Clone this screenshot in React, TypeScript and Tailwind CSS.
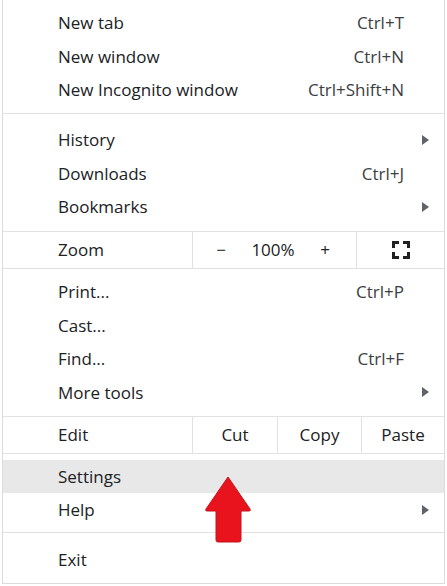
import type { ReactNode } from "react";

type Item = { label: string; shortcut?: string; submenu?: boolean; active?: boolean };

const font = { fontFamily: '"Open Sans", "Noto Sans", sans-serif' };

function Arrow() {
  return (
    <svg width="7" height="10" viewBox="0 0 7 10" className="absolute right-[15px] top-1/2 -translate-y-1/2">
      <path d="M0 0 L7 5 L0 10 Z" fill="#5f6368" />
    </svg>
  );
}

function Row({ item }: { item: Item }) {
  return (
    <div
      className={`relative flex h-[33.5px] items-center justify-between pl-[55px] pr-[40px] ${
        item.active ? "bg-[#e8e8e9]" : ""
      }`}
    >
      <span>{item.label}</span>
      {item.shortcut && <span className="text-[#3c4043]">{item.shortcut}</span>}
      {item.submenu && <Arrow />}
    </div>
  );
}

function Group({ items, className }: { items: Item[]; className: string }) {
  return (
    <div className={className}>
      {items.map((it) => (
        <Row key={it.label} item={it} />
      ))}
    </div>
  );
}

function Sep() {
  return <div className="h-px bg-[#e1e1e1]" />;
}

function Cell({ children, className }: { children: ReactNode; className: string }) {
  return <div className={`flex h-full items-center border-l border-[#e1e1e1] ${className}`}>{children}</div>;
}

function FullscreenIcon() {
  return (
    <svg width="18" height="18" viewBox="0 0 18 18" fill="none" stroke="#202124" strokeWidth="3">
      <path d="M1.5 7 V1.5 H7" />
      <path d="M11 1.5 H16.5 V7" />
      <path d="M16.5 11 V16.5 H11" />
      <path d="M7 16.5 H1.5 V11" />
    </svg>
  );
}

function RedArrow() {
  return (
    <svg
      width="50"
      height="70"
      viewBox="0 0 50 70"
      className="pointer-events-none absolute left-[203px] top-[475px]"
    >
      <path
        d="M25 2 L47 34 Q48 36 46 36 L38 36 L38 65 Q38 67 36 67 L15 67 Q13 67 13 65 L13 36 L4 36 Q2 36 3 34 Z"
        fill="#e8131d"
        stroke="#c4141c"
        strokeWidth="1"
        strokeLinejoin="round"
      />
    </svg>
  );
}

export default function App() {
  return (
    <div className="relative h-[586px] w-[447px] overflow-hidden bg-white text-[17px] text-[#202124]" style={font}>
      <div className="mx-[2px] h-[584px] border-x border-b border-[#dcdcdc]">
        <Group
          className="pt-[6px] pb-[6px]"
          items={[
            { label: "New tab", shortcut: "Ctrl+T" },
            { label: "New window", shortcut: "Ctrl+N" },
            { label: "New Incognito window", shortcut: "Ctrl+Shift+N" },
          ]}
        />
        <Sep />
        <Group
          className="pt-[9.5px] pb-[7px]"
          items={[
            { label: "History", submenu: true },
            { label: "Downloads", shortcut: "Ctrl+J" },
            { label: "Bookmarks", submenu: true },
          ]}
        />
        <Sep />
        <div className="flex h-[36px] items-center">
          <div className="flex h-full w-[189px] items-center pl-[55px]">Zoom</div>
          <Cell className="w-[164px] pl-[2px]">
            <span className="w-[52px] text-center">−</span>
            <span className="w-[52px] text-center">100%</span>
            <span className="w-[52px] text-center">+</span>
          </Cell>
          <Cell className="flex-1 justify-center">
            <FullscreenIcon />
          </Cell>
        </div>
        <Sep />
        <Group
          className="pt-[6.5px] pb-[6.5px]"
          items={[
            { label: "Print...", shortcut: "Ctrl+P" },
            { label: "Cast..." },
            { label: "Find...", shortcut: "Ctrl+F" },
            { label: "More tools", submenu: true },
          ]}
        />
        <Sep />
        <div className="flex h-[36px] items-center">
          <div className="flex h-full w-[189px] items-center pl-[55px]">Edit</div>
          <Cell className="w-[85px] justify-center">Cut</Cell>
          <Cell className="w-[84px] justify-center">Copy</Cell>
          <Cell className="flex-1 justify-center">Paste</Cell>
        </div>
        <Sep />
        <Group
          className="pt-[6px] pb-[5px]"
          items={[
            { label: "Settings", active: true },
            { label: "Help", submenu: true },
          ]}
        />
        <Sep />
        <Group className="pt-[10px] pb-[6px]" items={[{ label: "Exit" }]} />
      </div>
      <RedArrow />
    </div>
  );
}
